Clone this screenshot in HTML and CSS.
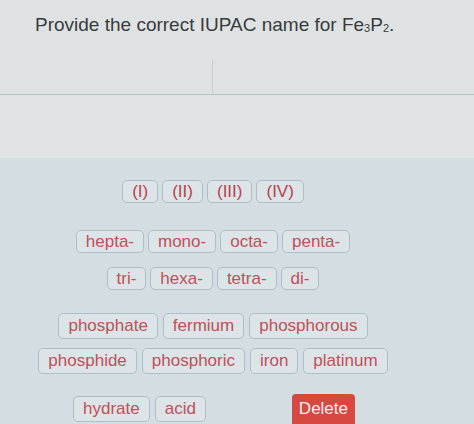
FILE: index.html
```html
<!DOCTYPE html>
<html>
<head>
<meta charset="utf-8">
<link rel="stylesheet" href="styles.css">
</head>
<body>
<div class="question">Provide the correct IUPAC name for Fe<sub class="sub">3</sub>P<sub class="sub">2</sub>.</div>
<div class="answer"><div class="answer-left"></div><div class="answer-right"></div></div>
<div class="spacer"></div>
<div class="tray">
  <div class="col">
    <div class="row r1">
      <span class="chip">(I)</span><span class="chip">(II)</span><span class="chip">(III)</span><span class="chip">(IV)</span>
    </div>
    <div class="row r2">
      <span class="chip">hepta-</span><span class="chip">mono-</span><span class="chip">octa-</span><span class="chip">penta-</span>
    </div>
    <div class="row r3">
      <span class="chip">tri-</span><span class="chip">hexa-</span><span class="chip">tetra-</span><span class="chip">di-</span>
    </div>
    <div class="row r4 big">
      <span class="chip">phosphate</span><span class="chip">fermium</span><span class="chip">phosphorous</span>
    </div>
    <div class="row r5 big">
      <span class="chip">phosphide</span><span class="chip">phosphoric</span><span class="chip">iron</span><span class="chip">platinum</span>
    </div>
    <div class="actions big">
      <span class="chip">hydrate</span><span class="chip">acid</span>
      <button class="delete">Delete</button>
    </div>
  </div>
</div>
</body>
</html>
```
FILE: styles.css
```css
html, body {
  margin: 0;
  padding: 0;
}
body {
  width: 474px;
  height: 424px;
  overflow: hidden;
  background: #dfe2e3;
  font-family: "Liberation Sans", Arial, sans-serif;
}
.question {
  padding: 13px 0 0 35px;
  height: 47px;
  font-size: 19px;
  line-height: 24px;
  color: #383b3d;
}
.sub {
  font-size: 11px;
  vertical-align: -1px;
  line-height: 0;
}
.answer {
  display: flex;
  height: 34px;
  border-bottom: 1px solid #b9c4c7;
}
.answer-left {
  width: 212px;
  border-right: 1px solid #c4cdcf;
}
.spacer {
  height: 63px;
  background: #e1e4e4;
}
.tray {
  background: #d4dee2;
  height: 266px;
  padding-top: 22px;
  box-sizing: border-box;
}
.col {
  width: 426px;
  display: flex;
  flex-direction: column;
}
.row {
  display: flex;
  justify-content: center;
  gap: 4px;
}
.chip {
  box-sizing: border-box;
  height: 23px;
  padding: 0 9px;
  border: 1px solid #adbec6;
  border-radius: 5px;
  background: #dce4e7;
  color: #c0505a;
  font-size: 17px;
  line-height: 21px;
  white-space: nowrap;
}
.big .chip {
  height: 26px;
  line-height: 24px;
}
.r1 .chip {
  color: #b8404e;
}
.r2 { margin-top: 27px; }
.r3 { margin-top: 14px; }
.r4 { margin-top: 23px; gap: 5px; }
.r5 { margin-top: 9px; gap: 5px; }
.actions {
  display: flex;
  gap: 5px;
  margin-top: 21px;
  padding: 1px 71px 0 73px;
}
.delete {
  margin-left: auto;
  height: 34px;
  padding: 0 7px 4px;
  border: none;
  border-radius: 4px;
  background: #d64941;
  color: #fbeeee;
  font-family: "Liberation Sans", Arial, sans-serif;
  font-size: 17px;
  margin-top: -2px;
}
```
